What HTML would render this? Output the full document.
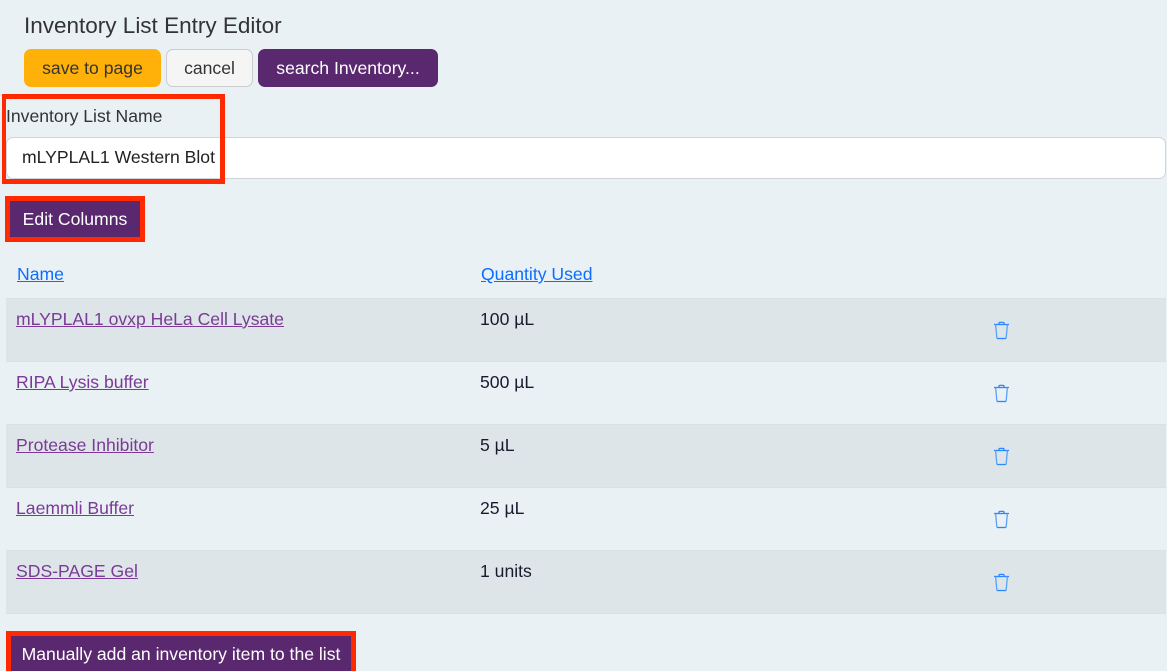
<!DOCTYPE html>
<html><head><meta charset="utf-8">
<style>
html,body{margin:0;padding:0;width:1167px;height:671px;overflow:hidden;background:#e9f1f4}
#p{position:relative;width:1167px;height:671px;overflow:hidden;background:#e9f1f4;font-family:"Liberation Sans",sans-serif;font-size:17.6px;color:#333}
.a{position:absolute;white-space:nowrap;line-height:20px}
.btn{position:absolute;box-sizing:border-box;text-align:center;border-radius:7px;height:38px;line-height:38px}
.row{position:absolute;left:6px;width:1160px;height:64px;box-sizing:border-box}
.g{background:#dee5e8;border-top:1px solid #d9e1e4;border-bottom:1px solid #d9e1e4}
.l{color:#7a3a96;text-decoration:underline}
.q{color:#1a1a2e}
.red{position:absolute;box-sizing:border-box;border:5px solid #ff2a00}
.pb{position:absolute;background:#5a286e;color:#fff;text-align:center;white-space:nowrap}
svg{position:absolute}
</style></head><body><div id="p">
<div class="a" style="left:24px;top:12px;font-size:22.500px;line-height:28px">Inventory List Entry Editor</div>
<div class="btn" style="left:24px;top:49px;width:137px;background:#ffb10a;color:#333">save to page</div>
<div class="btn" style="left:166px;top:49px;width:87px;background:#f5f5f5;border:1px solid #ccc;line-height:36px;color:#333">cancel</div>
<div class="btn" style="left:258px;top:49px;width:180px;background:#5a286e;color:#fff">search Inventory...</div>

<div class="a" style="left:6px;top:106px">Inventory List Name</div>
<div style="position:absolute;left:6px;top:137px;width:1160px;height:42px;box-sizing:border-box;background:#fff;border:1px solid #ced4da;border-radius:7px"></div>
<div class="a" style="left:22px;top:147px;color:#222">mLYPLAL1 Western Blot</div>
<div class="red" style="left:2px;top:94px;width:223px;height:90px;border-width:5px 5px 5px 4px"></div>

<div class="pb" style="left:5px;top:196px;width:140px;height:46px;box-sizing:border-box;border:5px solid #ff2a00;line-height:36px">Edit Columns</div>

<a class="a" style="left:17px;top:264px;color:#0d6efd;text-decoration:underline">Name</a>
<a class="a" style="left:481px;top:264px;color:#0d6efd;text-decoration:underline">Quantity Used</a>

<div class="row g" style="top:298px"></div>
<div class="row g" style="top:424px"></div>
<div class="row g" style="top:550px"></div>

<div class="a l" style="left:16px;top:309px">mLYPLAL1 ovxp HeLa Cell Lysate</div>
<div class="a q" style="left:480px;top:309px">100 µL</div>
<div class="a l" style="left:16px;top:372px">RIPA Lysis buffer</div>
<div class="a q" style="left:480px;top:372px">500 µL</div>
<div class="a l" style="left:16px;top:435px">Protease Inhibitor</div>
<div class="a q" style="left:480px;top:435px">5 µL</div>
<div class="a l" style="left:16px;top:498px">Laemmli Buffer</div>
<div class="a q" style="left:480px;top:498px">25 µL</div>
<div class="a l" style="left:16px;top:561px">SDS-PAGE Gel</div>
<div class="a q" style="left:480px;top:561px">1 units</div>

<svg style="left:993px;top:321px" width="17" height="19" viewBox="0 0 17 19" fill="none" stroke="#2b87ff" stroke-width="1.300"><path d="M1 3.500h15"/><path d="M6 3V2.300Q6 1.400 7 1.400h3Q11 1.400 11 2.300V3"/><path d="M3.900 17.500h9.200"/><path d="M2.600 3.500l1.300 14M14.400 3.500l-1.300 14" stroke="#5b9ff8"/></svg>
<svg style="left:993px;top:384px" width="17" height="19" viewBox="0 0 17 19" fill="none" stroke="#2b87ff" stroke-width="1.300"><path d="M1 3.500h15"/><path d="M6 3V2.300Q6 1.400 7 1.400h3Q11 1.400 11 2.300V3"/><path d="M3.900 17.500h9.200"/><path d="M2.600 3.500l1.300 14M14.400 3.500l-1.300 14" stroke="#5b9ff8"/></svg>
<svg style="left:993px;top:447px" width="17" height="19" viewBox="0 0 17 19" fill="none" stroke="#2b87ff" stroke-width="1.300"><path d="M1 3.500h15"/><path d="M6 3V2.300Q6 1.400 7 1.400h3Q11 1.400 11 2.300V3"/><path d="M3.900 17.500h9.200"/><path d="M2.600 3.500l1.300 14M14.400 3.500l-1.300 14" stroke="#5b9ff8"/></svg>
<svg style="left:993px;top:510px" width="17" height="19" viewBox="0 0 17 19" fill="none" stroke="#2b87ff" stroke-width="1.300"><path d="M1 3.500h15"/><path d="M6 3V2.300Q6 1.400 7 1.400h3Q11 1.400 11 2.300V3"/><path d="M3.900 17.500h9.200"/><path d="M2.600 3.500l1.300 14M14.400 3.500l-1.300 14" stroke="#5b9ff8"/></svg>
<svg style="left:993px;top:573px" width="17" height="19" viewBox="0 0 17 19" fill="none" stroke="#2b87ff" stroke-width="1.300"><path d="M1 3.500h15"/><path d="M6 3V2.300Q6 1.400 7 1.400h3Q11 1.400 11 2.300V3"/><path d="M3.900 17.500h9.200"/><path d="M2.600 3.500l1.300 14M14.400 3.500l-1.300 14" stroke="#5b9ff8"/></svg>

<div class="pb" style="left:6px;top:631px;width:350px;height:46px;box-sizing:border-box;border:5px solid #ff2a00;line-height:36px">Manually add an inventory item to the list</div>
</div></body></html>
